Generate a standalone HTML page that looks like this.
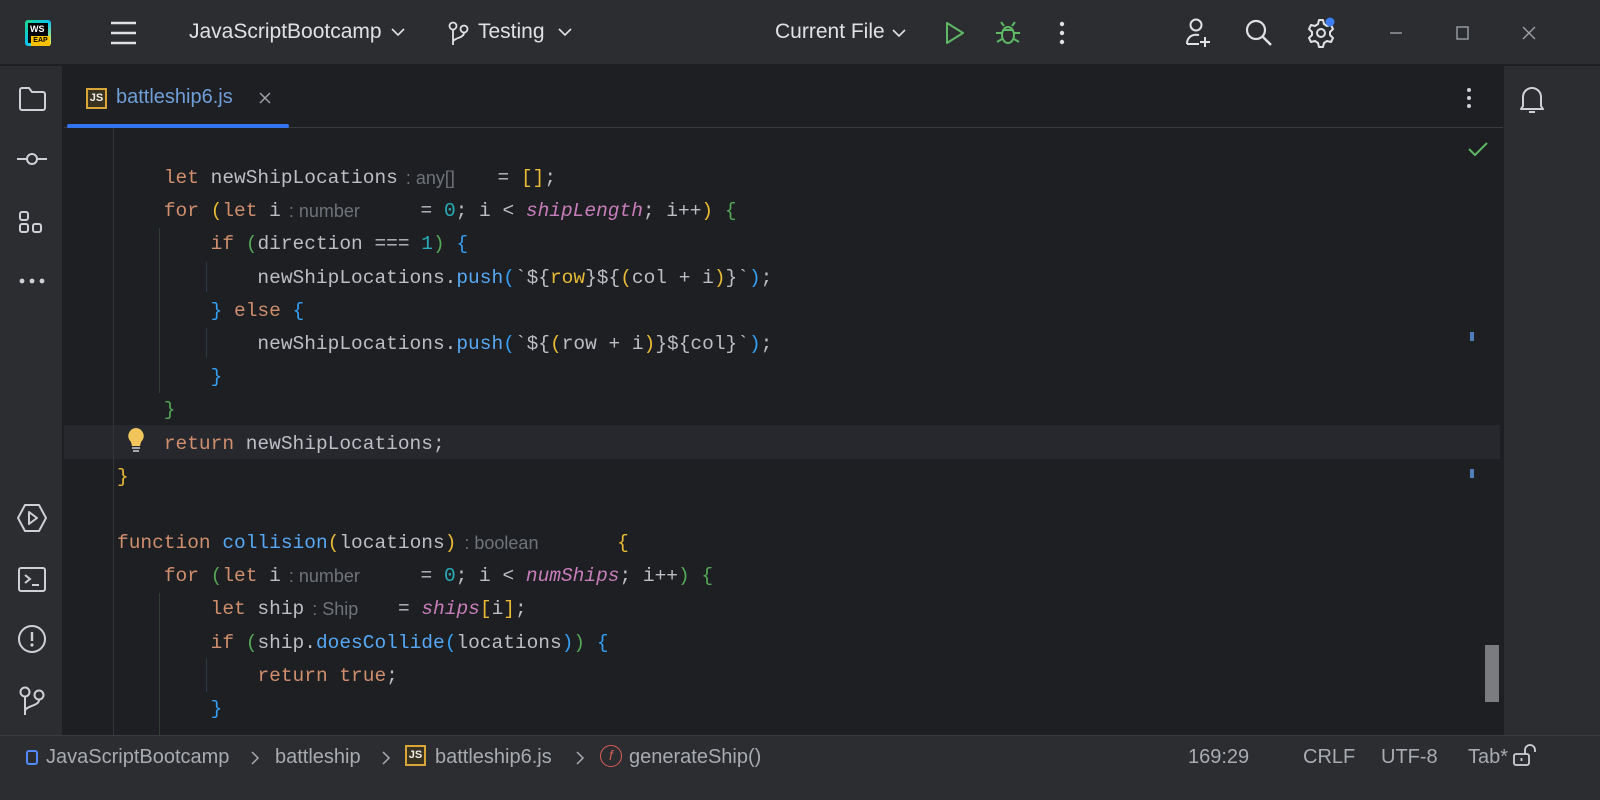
<!DOCTYPE html>
<html><head><meta charset="utf-8"><style>
*{margin:0;padding:0;box-sizing:border-box}
html,body{width:1600px;height:800px;overflow:hidden}
body{background:#1e1f22;position:relative;font-family:"Liberation Sans",sans-serif;color:#dfe1e5}
.abs{position:absolute}
#title{left:0;top:0;width:1600px;height:65px;background:#2b2d30;border-bottom:1px solid #1e1f22}
#lbar{left:0;top:66px;width:63px;height:669px;background:#2b2d30;border-right:1px solid #1e1f22}
#rbar{left:1503px;top:66px;width:97px;height:669px;background:#2b2d30;border-left:1px solid #1e1f22}
#status{left:0;top:735px;width:1600px;height:65px;background:#2b2d30;border-top:1px solid #393b40}
.tt{font-size:21px;color:#dfe1e5;top:20px}
.code{left:64px;top:162px;font-family:"Liberation Mono",monospace;font-size:19.5px;line-height:33.2px;color:#bcbec4}
.ln{height:33.2px;padding-left:53px;white-space:pre}
.k{color:#cf8e6d}.f{color:#56a8f5}.p{color:#c77dbb;font-style:italic}.n{color:#2aacb8}
.y{color:#e8ba36}.g{color:#54a857}.b{color:#359ff4}
.h{display:inline-block;font-family:"Liberation Sans",sans-serif;font-size:18px;color:#6f737a;vertical-align:top}
.guide{position:absolute;width:1px;background:#313438}
svg{position:absolute}
.sb{font-size:20px;color:#a8abb0;top:746px}
</style></head><body>
<div id="title" class="abs"></div>
<div class="abs" style="left:25px;top:20px;width:26px;height:26px;background:linear-gradient(135deg,#21d789,#07c3f2 50%,#fcf84a);border-radius:3px"></div>
<div class="abs" style="left:28px;top:23px;width:20px;height:20px;background:#000;color:#fff;font-size:9px;font-weight:bold;padding:1px 2px">WS</div>
<div class="abs" style="left:31px;top:36px;width:19px;height:10px;background:#f9c100;color:#000;font-size:7px;font-weight:bold;text-align:center;line-height:10px">EAP</div>
<svg style="left:110px;top:20px" width="28" height="26"><path d="M1 3h25M1 13h25M1 23h25" stroke="#dfe1e5" stroke-width="2.4"/></svg>
<div class="abs tt" style="left:189px">JavaScriptBootcamp</div>
<svg style="left:391px;top:27px" width="14" height="10"><path d="M1 2l6 6 6-6" stroke="#dfe1e5" stroke-width="1.6" fill="none"/></svg>
<svg style="left:448px;top:21px" width="22" height="26"><circle cx="5" cy="5" r="3.5" stroke="#dfe1e5" stroke-width="1.8" fill="none"/><circle cx="16" cy="8" r="3.5" stroke="#dfe1e5" stroke-width="1.8" fill="none"/><path d="M5 9v15M16 12c0 5-11 5-11 9" stroke="#dfe1e5" stroke-width="1.8" fill="none"/></svg>
<div class="abs tt" style="left:478px">Testing</div>
<svg style="left:558px;top:27px" width="14" height="10"><path d="M1 2l6 6 6-6" stroke="#dfe1e5" stroke-width="1.6" fill="none"/></svg>
<div class="abs tt" style="left:775px">Current File</div>
<svg style="left:892px;top:28px" width="14" height="10"><path d="M1 2l6 6 6-6" stroke="#dfe1e5" stroke-width="1.6" fill="none"/></svg>
<svg style="left:944px;top:21px" width="22" height="24"><path d="M3 2l16 10L3 22z" stroke="#5fb865" stroke-width="2" fill="none" stroke-linejoin="round"/></svg>
<svg style="left:994px;top:20px" width="28" height="26"><ellipse cx="14" cy="15" rx="6" ry="8" stroke="#5fb865" stroke-width="2" fill="none"/><path d="M10 6l-3-4M18 6l3-4M8 13H2M26 13h-6M8 19l-5 3M20 19l5 3M9 10h10" stroke="#5fb865" stroke-width="2" fill="none"/></svg>
<svg style="left:1058px;top:20px" width="8" height="26"><circle cx="4" cy="4" r="2.2" fill="#dfe1e5"/><circle cx="4" cy="13" r="2.2" fill="#dfe1e5"/><circle cx="4" cy="22" r="2.2" fill="#dfe1e5"/></svg>
<svg style="left:1184px;top:17px" width="30" height="32"><circle cx="12" cy="8" r="5.5" stroke="#dfe1e5" stroke-width="2" fill="none"/><path d="M3 27c0-7 5-10 12-9M3 27h12M21 20v10M16 25h10" stroke="#dfe1e5" stroke-width="2" fill="none"/></svg>
<svg style="left:1244px;top:18px" width="30" height="30"><circle cx="12" cy="12" r="9" stroke="#dfe1e5" stroke-width="2.2" fill="none"/><path d="M19 19l8 8" stroke="#dfe1e5" stroke-width="2.4"/></svg>
<svg style="left:1305px;top:17px" width="32" height="32"><path d="M14 3h4l1 4 3 2 4-1 2 4-3 3v3l3 3-2 4-4-1-3 2-1 4h-4l-1-4-3-2-4 1-2-4 3-3v-3l-3-3 2-4 4 1 3-2z" stroke="#dfe1e5" stroke-width="2" fill="none" stroke-linejoin="round"/><circle cx="16" cy="16" r="4" stroke="#dfe1e5" stroke-width="2" fill="none"/><circle cx="25" cy="5" r="4.5" fill="#3d7ef5"/></svg>
<svg style="left:1388px;top:25px" width="16" height="16"><path d="M2 8h12" stroke="#9da0a8" stroke-width="1.4"/></svg>
<svg style="left:1455px;top:25px" width="16" height="16"><rect x="2" y="2" width="11" height="12" stroke="#9da0a8" stroke-width="1.4" fill="none"/></svg>
<svg style="left:1521px;top:25px" width="16" height="16"><path d="M2 2l12 12M14 2L2 14" stroke="#9da0a8" stroke-width="1.4"/></svg>

<div id="lbar" class="abs"></div>
<svg style="left:18px;top:86px" width="30" height="26"><path d="M2 4a2 2 0 012-2h7l3 4h11a2 2 0 012 2v14a2 2 0 01-2 2H4a2 2 0 01-2-2z" stroke="#ced0d6" stroke-width="2" fill="none"/></svg>
<svg style="left:16px;top:148px" width="32" height="22"><circle cx="16" cy="11" r="5" stroke="#ced0d6" stroke-width="2" fill="none"/><path d="M1 11h10M21 11h10" stroke="#ced0d6" stroke-width="2"/></svg>
<svg style="left:18px;top:210px" width="28" height="26"><rect x="2" y="2" width="8" height="8" rx="2" stroke="#ced0d6" stroke-width="2" fill="none"/><rect x="2" y="14" width="8" height="8" rx="2" stroke="#ced0d6" stroke-width="2" fill="none"/><rect x="15" y="14" width="8" height="8" rx="2" stroke="#ced0d6" stroke-width="2" fill="none"/></svg>
<svg style="left:18px;top:276px" width="28" height="10"><circle cx="4" cy="5" r="2.4" fill="#ced0d6"/><circle cx="14" cy="5" r="2.4" fill="#ced0d6"/><circle cx="24" cy="5" r="2.4" fill="#ced0d6"/></svg>
<svg style="left:16px;top:503px" width="32" height="30"><path d="M9 2h14l7 13-7 13H9L2 15z" stroke="#ced0d6" stroke-width="2" fill="none" stroke-linejoin="round"/><path d="M13 9l8 6-8 6z" stroke="#ced0d6" stroke-width="2" fill="none" stroke-linejoin="round"/></svg>
<svg style="left:17px;top:566px" width="30" height="28"><rect x="2" y="2" width="26" height="23" rx="2" stroke="#ced0d6" stroke-width="2" fill="none"/><path d="M8 9l5 4-5 4M15 19h7" stroke="#ced0d6" stroke-width="2" fill="none"/></svg>
<svg style="left:17px;top:624px" width="30" height="30"><circle cx="15" cy="15" r="13" stroke="#ced0d6" stroke-width="2" fill="none"/><path d="M15 8v9" stroke="#ced0d6" stroke-width="2.4"/><circle cx="15" cy="21" r="1.6" fill="#ced0d6"/></svg>
<svg style="left:18px;top:685px" width="28" height="32"><circle cx="7" cy="7" r="4.5" stroke="#ced0d6" stroke-width="2" fill="none"/><circle cx="21" cy="10" r="4.5" stroke="#ced0d6" stroke-width="2" fill="none"/><path d="M7 12v18M21 15c0 6-14 6-14 11" stroke="#ced0d6" stroke-width="2" fill="none"/></svg>

<div class="abs" style="left:64px;top:127px;width:1439px;height:1px;background:#393b40"></div>
<div class="abs" style="left:86px;top:88px;width:21px;height:21px;border:2px solid #d8a53a;background:#3a3220;color:#eee;font-size:11px;font-weight:bold;text-align:center;line-height:17px">JS</div>
<div class="abs" style="left:116px;top:86px;font-size:20px;color:#6f9fd8">battleship6.js</div>
<svg style="left:258px;top:91px" width="14" height="14"><path d="M2 2l10 10M12 2L2 12" stroke="#9da0a8" stroke-width="1.5"/></svg>
<div class="abs" style="left:67px;top:124px;width:222px;height:4px;background:#3574f0;border-radius:2px"></div>
<svg style="left:1465px;top:86px" width="8" height="24"><circle cx="4" cy="4" r="2" fill="#ced0d6"/><circle cx="4" cy="12" r="2" fill="#ced0d6"/><circle cx="4" cy="20" r="2" fill="#ced0d6"/></svg>

<div id="rbar" class="abs"></div>
<svg style="left:1518px;top:84px" width="28" height="32"><path d="M5 22V13a9 9 0 0118 0v9l2 3H3z" stroke="#ced0d6" stroke-width="2" fill="none" stroke-linejoin="round"/><path d="M11 28h6" stroke="#ced0d6" stroke-width="2"/></svg>

<div class="abs" style="left:64px;top:425px;width:1436px;height:34px;background:#26282e"></div>
<svg style="left:126px;top:427px" width="20" height="26"><path d="M10 1a8 8 0 00-5 14l1 4h8l1-4a8 8 0 00-5-14z" fill="#f2c55c"/><path d="M6 21h8M7 24h6" stroke="#ced0d6" stroke-width="1.6"/></svg>
<svg style="left:1467px;top:140px" width="22" height="18"><path d="M2 9l6 6 12-12" stroke="#5fb865" stroke-width="2" fill="none"/></svg>
<div class="abs" style="left:1470px;top:332px;width:4px;height:9px;background:#4d7fb8"></div>
<div class="abs" style="left:1470px;top:469px;width:4px;height:9px;background:#4d7fb8"></div>
<div class="abs" style="left:1485px;top:645px;width:14px;height:57px;background:#7a7c80"></div>

<div class="guide" style="left:113px;top:128px;height:607px"></div>
<div class="guide" style="left:159px;top:228px;height:165px;background:#2f3d33"></div>
<div class="guide" style="left:206px;top:262px;height:30px;background:#2b3a4a"></div>
<div class="guide" style="left:206px;top:328px;height:30px;background:#2b3a4a"></div>
<div class="guide" style="left:159px;top:593px;height:142px;background:#2f3d33"></div>
<div class="guide" style="left:206px;top:658px;height:34px;background:#2b3a4a"></div>

<div class="abs code"><div class="ln">    <span class="k">let</span> newShipLocations<span class="h" style="width:88px;padding-left:8px">: any[]</span> = <span class="y">[]</span>;</div><div class="ln">    <span class="k">for</span> <span class="y">(</span><span class="k">let</span> i<span class="h" style="width:128px;padding-left:8px">: number</span> = <span class="n">0</span>; i &lt; <span class="p">shipLength</span>; i++<span class="y">)</span> <span class="g">{</span></div><div class="ln">        <span class="k">if</span> <span class="g">(</span>direction === <span class="n">1</span><span class="g">)</span> <span class="b">{</span></div><div class="ln">            newShipLocations.<span class="f">push</span><span class="b">(</span>`${<span class="y">row</span>}${<span class="y">(</span>col + i<span class="y">)</span>}`<span class="b">)</span>;</div><div class="ln">        <span class="b">}</span> <span class="k">else</span> <span class="b">{</span></div><div class="ln">            newShipLocations.<span class="f">push</span><span class="b">(</span>`${<span class="y">(</span>row + i<span class="y">)</span>}${col}`<span class="b">)</span>;</div><div class="ln">        <span class="b">}</span></div><div class="ln">    <span class="g">}</span></div><div class="ln">    <span class="k">return</span> newShipLocations;</div><div class="ln"><span class="y">}</span></div><div class="ln"> </div><div class="ln"><span class="k">function</span> <span class="f">collision</span><span class="y">(</span>locations<span class="y">)</span><span class="h" style="width:149px;padding-left:8px">: boolean</span> <span class="y">{</span></div><div class="ln">    <span class="k">for</span> <span class="g">(</span><span class="k">let</span> i<span class="h" style="width:128px;padding-left:8px">: number</span> = <span class="n">0</span>; i &lt; <span class="p">numShips</span>; i++<span class="g">)</span> <span class="g">{</span></div><div class="ln">        <span class="k">let</span> ship<span class="h" style="width:82px;padding-left:8px">: Ship</span> = <span class="p">ships</span><span class="y">[</span>i<span class="y">]</span>;</div><div class="ln">        <span class="k">if</span> <span class="g">(</span>ship.<span class="f">doesCollide</span><span class="b">(</span>locations<span class="b">)</span><span class="g">)</span> <span class="b">{</span></div><div class="ln">            <span class="k">return true</span>;</div><div class="ln">        <span class="b">}</span></div></div>

<div id="status" class="abs"></div>
<div class="abs" style="left:26px;top:750px;width:12px;height:15px;border:2px solid #548af7;border-radius:3px"></div>
<div class="abs sb" style="left:46px">JavaScriptBootcamp</div>
<svg style="left:250px;top:750px" width="10" height="16"><path d="M2 2l6 6-6 6" stroke="#a8abb0" stroke-width="1.5" fill="none"/></svg>
<div class="abs sb" style="left:275px">battleship</div>
<svg style="left:381px;top:750px" width="10" height="16"><path d="M2 2l6 6-6 6" stroke="#a8abb0" stroke-width="1.5" fill="none"/></svg>
<div class="abs" style="left:405px;top:745px;width:21px;height:21px;border:2px solid #d8a53a;background:#3a3220;color:#eee;font-size:11px;font-weight:bold;text-align:center;line-height:17px">JS</div>
<div class="abs sb" style="left:435px">battleship6.js</div>
<svg style="left:575px;top:750px" width="10" height="16"><path d="M2 2l6 6-6 6" stroke="#a8abb0" stroke-width="1.5" fill="none"/></svg>
<div class="abs" style="left:600px;top:745px;width:22px;height:22px;border:1.6px solid #d95e57;border-radius:50%;color:#d95e57;font-size:14px;text-align:center;line-height:19px;font-style:italic">f</div>
<div class="abs sb" style="left:629px">generateShip()</div>
<div class="abs sb" style="left:1188px">169:29</div>
<div class="abs sb" style="left:1303px">CRLF</div>
<div class="abs sb" style="left:1381px">UTF-8</div>
<div class="abs sb" style="left:1468px">Tab*</div>
<svg style="left:1512px;top:744px" width="26" height="24"><rect x="2" y="10" width="15" height="11" rx="2" stroke="#ced0d6" stroke-width="1.8" fill="none"/><path d="M13 10V6a5 5 0 0110 0v2M9.5 14v3" stroke="#ced0d6" stroke-width="1.8" fill="none"/></svg>
</body></html>
